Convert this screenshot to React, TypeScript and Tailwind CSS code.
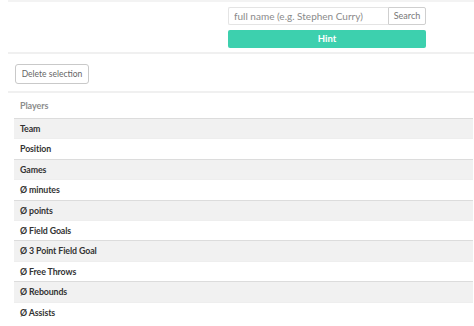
import React from "react";

const rows = [
  "Team",
  "Position",
  "Games",
  "Ø minutes",
  "Ø points",
  "Ø Field Goals",
  "Ø 3 Point Field Goal",
  "Ø Free Throws",
  "Ø Rebounds",
  "Ø Assists",
];

export default function App() {
  return (
    <div className="w-[474px] h-[326px] overflow-hidden bg-white pl-2 font-['Lato','Open_Sans',sans-serif]">
      <div className="flex flex-col border-t-2 border-[#f3f3f3] pt-[5px] pb-[4px] border-b-2 border-b-[#f0f0f0]">
        <div className="ml-[220px] w-[198px] flex flex-col gap-[5px]">
          <div className="flex h-[18px]">
            <input
              className="w-[160px] h-[18px] border border-[#e4e4e4] border-r-0 rounded-l-[2px] px-[5px] text-[10px] text-[#555] placeholder:text-[#8a8a8a] outline-none"
              placeholder="full name (e.g. Stephen Curry)"
            />
            <button className="w-[38px] h-[18px] border border-[#cfcfcf] rounded-r-[2px] text-[9px] text-[#777] bg-white">
              Search
            </button>
          </div>
          <button className="w-[198px] h-[18px] rounded-[2px] bg-[#3dd0ae] text-white text-[9.5px] font-bold">
            Hint
          </button>
        </div>
      </div>
      <div className="flex pt-[10px] pb-[7px] pl-[7px] border-b-2 border-[#f0f0f0]">
        <button className="w-[74px] h-[20px] border border-[#c9c9c9] rounded-[3px] text-[8.5px] text-[#666] bg-white">
          Delete selection
        </button>
      </div>
      <div className="flex flex-col ml-[6px] mr-[1px]">
        <div className="h-[25px] flex items-center pl-[6px] pt-[1px] text-[9px] font-bold text-[#8c8c8c] tracking-[-0.1px]">
          Players
        </div>
        {rows.map((r, i) => (
          <div
            key={r}
            className={
              i % 2 === 0
                ? "h-[20.4px] flex items-center pl-[6px] border-t border-[#dcdcdc] bg-[#f1f1f1] text-[8.8px] font-bold text-[#333] tracking-[-0.1px]"
                : "h-[20.4px] flex items-center pl-[6px] border-t border-[#eeeeee] bg-white text-[8.8px] font-bold text-[#333] tracking-[-0.1px]"
            }
          >
            {r}
          </div>
        ))}
      </div>
    </div>
  );
}
